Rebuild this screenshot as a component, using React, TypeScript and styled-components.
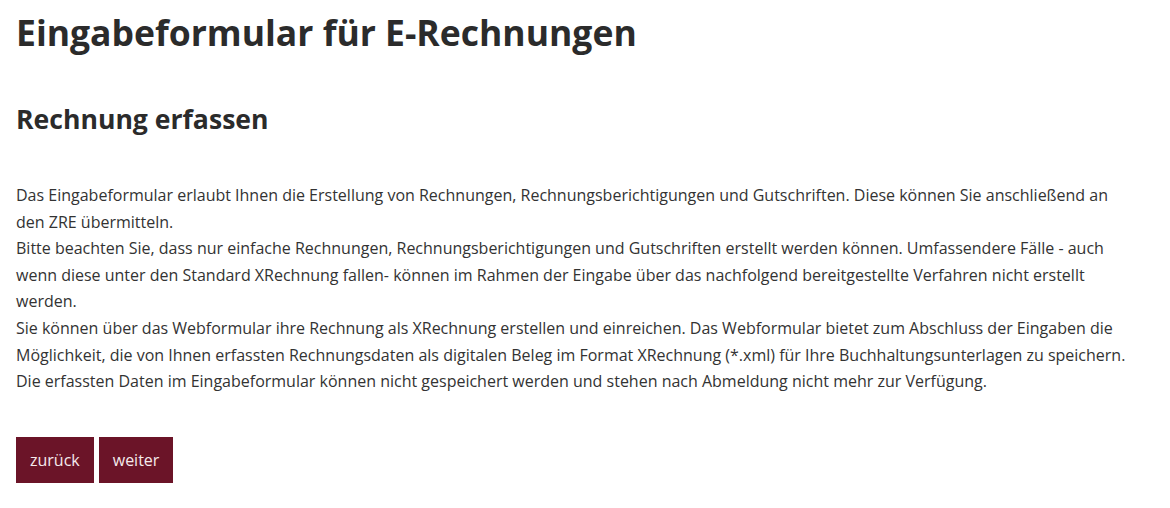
import styled, { createGlobalStyle } from "styled-components";

const GlobalStyle = createGlobalStyle`
  html, body {
    margin: 0;
    padding: 0;
    background: #ffffff;
  }
  body {
    font-family: "Open Sans", "Noto Sans", Arial, sans-serif;
    color: #333333;
  }
`;

const Page = styled.main`
  box-sizing: border-box;
  width: 1170px;
  padding: 0 40px 0 16px;
`;

const Title = styled.h1`
  margin: 0;
  padding-top: 9px;
  font-size: 35.5px;
  font-weight: 700;
  line-height: 46px;
  color: #2b2b2b;
`;

const SubTitle = styled.h2`
  margin: 47px 0 0 0;
  font-size: 26.6px;
  font-weight: 700;
  line-height: 34px;
  color: #2b2b2b;
`;

const Intro = styled.p`
  margin: 46px 0 0 0;
  font-size: 16px;
  line-height: 26.6px;
  color: #333333;
`;

const Actions = styled.div`
  display: flex;
  gap: 5px;
  margin-top: 42px;
`;

const ActionButton = styled.button`
  height: 46px;
  padding: 0 14px;
  border: none;
  border-radius: 0;
  background: #6b1428;
  color: #f5eaec;
  font-family: "Open Sans", "Noto Sans", Arial, sans-serif;
  font-size: 16px;
  cursor: pointer;
`;

export default function App() {
  return (
    <>
      <GlobalStyle />
      <Page>
        <Title>Eingabeformular für E-Rechnungen</Title>
        <SubTitle>Rechnung erfassen</SubTitle>
        <Intro>
          Das Eingabeformular erlaubt Ihnen die Erstellung von Rechnungen,
          Rechnungsberichtigungen und Gutschriften. Diese können Sie
          anschließend an den ZRE übermitteln.
          <br />
          Bitte beachten Sie, dass nur einfache Rechnungen,
          Rechnungsberichtigungen und Gutschriften erstellt werden können.
          Umfassendere Fälle - auch wenn diese unter den Standard XRechnung
          fallen- können im Rahmen der Eingabe über das nachfolgend
          bereitgestellte Verfahren nicht erstellt werden.
          <br />
          Sie können über das Webformular ihre Rechnung als XRechnung erstellen
          und einreichen. Das Webformular bietet zum Abschluss der Eingaben die
          Möglichkeit, die von Ihnen erfassten Rechnungsdaten als digitalen
          Beleg im Format XRechnung (*.xml) für Ihre Buchhaltungsunterlagen zu
          speichern. Die erfassten Daten im Eingabeformular können nicht
          gespeichert werden und stehen nach Abmeldung nicht mehr zur
          Verfügung.
        </Intro>
        <Actions>
          <ActionButton type="button">zurück</ActionButton>
          <ActionButton type="button">weiter</ActionButton>
        </Actions>
      </Page>
    </>
  );
}
